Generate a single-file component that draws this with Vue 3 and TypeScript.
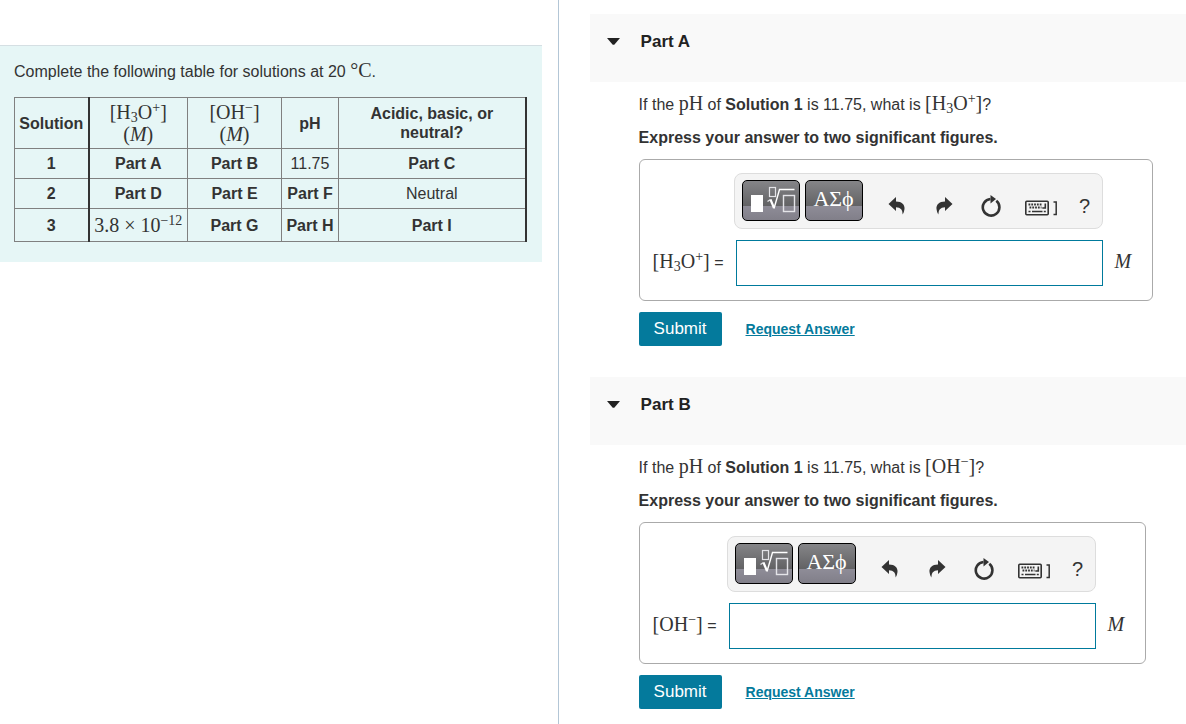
<script setup lang="ts">
import { ref } from 'vue'

interface Token {
  text: string
  tag: 'span' | 'sub' | 'sup'
}

interface Part {
  id: string
  title: string
  formula: Token[]
}

const hydronium: Token[] = [
  { text: '[', tag: 'span' },
  { text: 'H', tag: 'span' },
  { text: '3', tag: 'sub' },
  { text: 'O', tag: 'span' },
  { text: '+', tag: 'sup' },
  { text: ']', tag: 'span' },
]

const hydroxide: Token[] = [
  { text: '[', tag: 'span' },
  { text: 'OH', tag: 'span' },
  { text: '−', tag: 'sup' },
  { text: ']', tag: 'span' },
]

const parts: Part[] = [
  { id: 'a', title: 'Part A', formula: hydronium },
  { id: 'b', title: 'Part B', formula: hydroxide },
]

const answers = ref<Record<string, string>>({ a: '', b: '' })
</script>

<template>
  <div class="page">
    <aside class="problem">
      <div class="prompt">
        <p class="intro">Complete the following table for solutions at 20 <span class="math">°C</span>.</p>
        <table class="solutions">
          <colgroup>
            <col class="c-solution" />
            <col class="c-acid" />
            <col class="c-base" />
            <col class="c-ph" />
            <col class="c-kind" />
          </colgroup>
          <thead>
            <tr>
              <th scope="col" class="rule">Solution</th>
              <th scope="col">
                <span class="math head-line"><component :is="t.tag" v-for="(t, i) in hydronium" :key="i">{{ t.text }}</component></span>
                <span class="math head-line">(<i>M</i>)</span>
              </th>
              <th scope="col">
                <span class="math head-line"><component :is="t.tag" v-for="(t, i) in hydroxide" :key="i">{{ t.text }}</component></span>
                <span class="math head-line">(<i>M</i>)</span>
              </th>
              <th scope="col">pH</th>
              <th scope="col" class="rule">Acidic, basic, or<br />neutral?</th>
            </tr>
          </thead>
          <tbody>
            <tr>
              <th scope="row" class="rule">1</th>
              <td><b>Part A</b></td>
              <td><b>Part B</b></td>
              <td>11.75</td>
              <td class="rule"><b>Part C</b></td>
            </tr>
            <tr>
              <th scope="row" class="rule">2</th>
              <td><b>Part D</b></td>
              <td><b>Part E</b></td>
              <td><b>Part F</b></td>
              <td class="rule">Neutral</td>
            </tr>
            <tr class="tall">
              <th scope="row" class="rule">3</th>
              <td><span class="math">3.8 × 10<sup>−12</sup></span></td>
              <td><b>Part G</b></td>
              <td><b>Part H</b></td>
              <td class="rule"><b>Part I</b></td>
            </tr>
          </tbody>
        </table>
      </div>
    </aside>

    <main class="parts">
      <section v-for="part in parts" :key="part.id" class="part">
        <h2 class="part-head">
          <button type="button" class="toggle" aria-expanded="true">
            <svg class="caret" viewBox="0 0 13 7" aria-hidden="true"><path d="M0 0h13L7.5 6.4q-1 .9-2 0z" fill="#222" /></svg>
            {{ part.title }}
          </button>
        </h2>
        <div class="part-body">
          <p class="question">If the <span class="math">pH</span> of <b>Solution 1</b> is 11.75, what is <span class="math"><component :is="t.tag" v-for="(t, i) in part.formula" :key="i">{{ t.text }}</component></span>?</p>
          <p class="instruction">Express your answer to two significant figures.</p>

          <div class="answer">
            <div class="toolbar" role="toolbar" aria-label="Equation tools">
              <button type="button" class="palette" aria-label="Templates">
                <svg class="root-icon" viewBox="1 1 56 39" aria-hidden="true">
                  <rect x="9" y="15" width="12" height="17" fill="#fff" />
                  <g fill="none" stroke="#e4e4e8">
                    <rect x="27.500" y="7.500" width="6" height="9" stroke-width="1.200" />
                    <path d="M25.500 21.500l3-2" stroke-width="1.400" />
                    <path d="M28.500 19.500l3.500 8.500" stroke="#fff" stroke-width="2.200" />
                    <path d="M32 28.500L37.500 9.500H52.500" stroke="#fff" stroke-width="1.400" />
                    <rect x="41.500" y="15.500" width="11" height="16" stroke-width="1.400" />
                  </g>
                </svg>
              </button>
              <button type="button" class="palette greek">ΑΣϕ</button>
              <button type="button" class="tool" aria-label="Undo">
                <svg width="18" height="18" viewBox="0 0 18 18" aria-hidden="true"><path d="M8 0v4.500C14 4.500 17 8 16.500 12q-.3 3-1.800 5.500Q15 10.500 8 10.200V14L.5 7z" fill="#333" /></svg>
              </button>
              <button type="button" class="tool" aria-label="Redo">
                <svg width="18" height="18" viewBox="0 0 18 18" aria-hidden="true"><path d="M10 0v4.500C4 4.500 1 8 1.500 12q.3 3 1.800 5.500Q3 10.500 10 10.200V14l7.500-7z" fill="#333" /></svg>
              </button>
              <button type="button" class="tool" aria-label="Reset">
                <svg width="20" height="22" viewBox="0 0 20 22" aria-hidden="true"><path d="M15.300 5.800A8.300 8.300 0 1 1 9.500 4" fill="none" stroke="#333" stroke-width="2.600" /><path d="M9.500 0l5.500 4-5.500 4.500z" fill="#333" /></svg>
              </button>
              <button type="button" class="tool keys" aria-label="Keyboard shortcuts">
                <svg width="34" height="16" viewBox="0 0 34 16" aria-hidden="true">
                  <rect x=".8" y="1.300" width="22.400" height="13.400" rx="1" fill="none" stroke="#333" stroke-width="1.600" />
                  <path d="M3.500 4.500h14M4.500 7.500h12" stroke="#333" stroke-width="1.800" stroke-dasharray="1.800 1" />
                  <path d="M20.300 3.500V8h-3" fill="none" stroke="#333" stroke-width="1.600" />
                  <path d="M3.500 11.500h2M7 11.500h10.500M18.800 11.500h2" stroke="#333" stroke-width="1.700" />
                  <path d="M28.500 2h2.700v12.500h-2.700" fill="none" stroke="#333" stroke-width="1.500" />
                </svg>
              </button>
              <button type="button" class="tool help" aria-label="Help">?</button>
            </div>
            <label class="lhs" :for="'answer-' + part.id"><span class="math"><component :is="t.tag" v-for="(t, i) in part.formula" :key="i">{{ t.text }}</component></span> =</label>
            <input :id="'answer-' + part.id" v-model="answers[part.id]" class="field" type="text" autocomplete="off" />
            <span class="math unit"><i>M</i></span>
          </div>

          <div class="actions">
            <button type="button" class="submit">Submit</button>
            <a class="request" href="#">Request Answer</a>
          </div>
        </div>
      </section>
    </main>
  </div>
</template>

<style>
body {
  margin: 0;
  background: #fff;
}
</style>

<style scoped>
.page {
  display: flex;
  min-height: 100vh;
  font-family: "Liberation Sans", Arial, sans-serif;
  font-size: 16px;
  line-height: 19px;
  color: #333;
}

button {
  font-family: inherit;
  cursor: pointer;
}

.problem {
  flex: 0 0 47.1%;
  box-sizing: border-box;
  padding: 45px 16px 0 0;
  border-right: 1px solid #b3c6d6;
}

.prompt {
  padding: 14px 15px 20px 14px;
  border-top: 1px solid #d5dfe3;
  background: #e6f6f6;
}

.intro {
  margin: 0 0 13px;
  line-height: 24px;
}

.math {
  font-family: "Liberation Serif", "Times New Roman", serif;
  font-size: 20px;
  font-weight: 400;
  line-height: 20px;
  white-space: nowrap;
}

.math sup,
.math sub {
  font-size: 14px;
  line-height: 0;
}

.math sup {
  vertical-align: 7px;
}

.math sub {
  vertical-align: -3px;
}

.solutions {
  width: 100%;
  table-layout: fixed;
  border-collapse: collapse;
  text-align: center;
}

.c-solution { width: 74px; }
.c-acid { width: 99px; }
.c-base { width: 94px; }
.c-ph { width: 57px; }

.solutions th,
.solutions td {
  height: 29px;
  padding: 0;
  border: 1px solid #808080;
  white-space: nowrap;
}

.solutions thead th {
  height: 50px;
}

.solutions .tall > * {
  height: 32px;
}

.solutions .rule {
  border-right: 2px solid #333;
}

.head-line {
  display: block;
  line-height: 22px;
}

.parts {
  flex: 1;
  min-width: 0;
  padding: 14px 0 0 31px;
}

.part + .part {
  margin-top: 31px;
}

.part-head {
  margin: 0;
  height: 68px;
  background: #f9f9f9;
}

.toggle {
  display: flex;
  align-items: center;
  gap: 21px;
  padding: 18px 17px;
  border: 0;
  background: none;
  color: #222;
  font-size: 17px;
  font-weight: 700;
  line-height: 19px;
}

.caret {
  width: 13px;
  height: 7px;
}

.part-body {
  padding: 11px 0 0 49px;
}

.question,
.instruction {
  margin: 0 0 9px;
  line-height: 24px;
}

.instruction {
  font-weight: 700;
}

.answer {
  display: grid;
  grid-template-columns: auto 367px auto;
  align-items: center;
  row-gap: 11px;
  width: fit-content;
  box-sizing: border-box;
  padding: 13px 21px 14px 13px;
  border: 1px solid #aaa;
  border-radius: 6px;
}

.toolbar {
  grid-column: 2;
  display: flex;
  align-items: center;
  box-sizing: border-box;
  height: 56px;
  margin-left: -2px;
  padding: 0 2px 2px 7px;
  border: 1px solid #ddd;
  border-radius: 8px;
  background: #f4f4f4;
}

.palette {
  flex: none;
  box-sizing: border-box;
  width: 58px;
  height: 41px;
  margin-right: 5px;
  padding: 0;
  border: 1px solid #000;
  border-radius: 5px;
  background: linear-gradient(#858588 0%, #626264 64%, #8e8c97 65%, #817f89 100%);
  color: #fff;
}

.root-icon {
  display: block;
  width: 100%;
  height: 100%;
}

.greek {
  padding-bottom: 3px;
  font-family: "Liberation Serif", "Times New Roman", serif;
  font-size: 22px;
}

.tool {
  display: flex;
  flex: 0 0 47px;
  align-items: center;
  justify-content: center;
  height: 40px;
  margin-top: 12px;
  padding: 0;
  border: 0;
  background: none;
  color: #333;
}

.palette + .tool {
  margin-left: 6px;
}

.keys {
  flex-basis: 55px;
  padding-top: 4px;
}

.help {
  flex: 1;
  font-size: 20px;
}

.lhs {
  grid-column: 1;
  padding: 0 12px 4px 0;
  white-space: nowrap;
}

.field {
  box-sizing: border-box;
  width: 100%;
  height: 46px;
  padding: 0 8px;
  border: 1px solid #007a9c;
  border-radius: 0;
  background: #fff;
  color: #333;
  font-family: inherit;
  font-size: 18px;
}

.unit {
  padding: 0 0 4px 12px;
}

.actions {
  display: flex;
  align-items: center;
  gap: 24px;
  margin-top: 11px;
}

.submit {
  height: 34px;
  padding: 0 15px;
  border: 0;
  border-radius: 2px;
  background: #047a9c;
  color: #fff;
  font-size: 17px;
}

.request {
  color: #047a9c;
  font-size: 14px;
  font-weight: 700;
}
</style>
